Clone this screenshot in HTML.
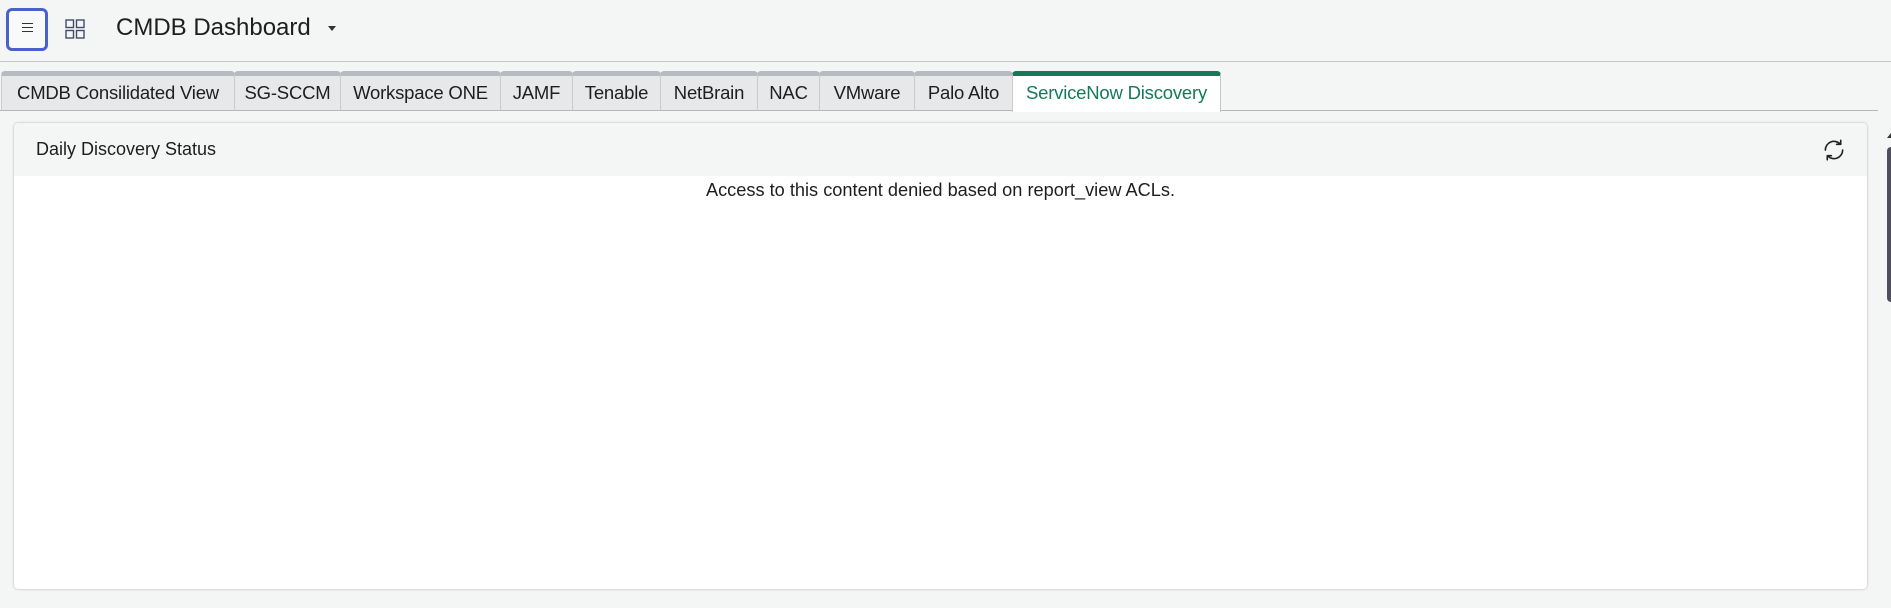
<!DOCTYPE html>
<html><head><meta charset="utf-8"><style>
*{box-sizing:border-box;margin:0;padding:0}
body{width:1891px;height:608px;background:#f4f5f5;font-family:"Liberation Sans",sans-serif;position:relative;overflow:hidden;color:#1e1e1e}
.hb{position:absolute;left:6px;top:8px;width:42px;height:43px;border:3px solid #4a62c8;border-radius:6px;background:#f8f9f9}
.hb i{position:absolute;left:13px;width:11px;height:1px;background:#333}
.grid{position:absolute;left:65px;top:19px;width:20px;height:20px}
.title{position:absolute;left:116px;top:14px;font-size:24px;color:#1e1e1e}
.caret{position:absolute;left:328px;top:26px;width:0;height:0;border-left:4px solid transparent;border-right:4px solid transparent;border-top:5px solid #333}
.hline{position:absolute;left:0;top:61px;width:1891px;height:1px;background:#c4c6c8}
.tabs{position:absolute;left:0;top:71px;height:40px;width:1891px}
.tline{position:absolute;left:0;top:110px;width:1878px;height:1px;background:#b4b8bc}
.tab{position:absolute;top:0;height:40px;background:#e6e8ea;border:1px solid #c8cbce;border-top:5px solid #b7bac0;border-radius:4px 4px 0 0;font-size:18.5px;text-align:center;line-height:33px;color:#1e1e1e;letter-spacing:-0.2px}
.tab.a{background:#fff;border-top-color:#15795a;color:#15795a;border-bottom:none}
.card{position:absolute;left:14px;top:123px;width:1853px;height:466px;background:#fff;border-radius:4px;box-shadow:0 0 2px rgba(0,0,0,.3);overflow:hidden}
.ch{height:53px;background:#f4f5f5;font-size:18px;padding-left:22px;line-height:53px}
.msg{text-align:center;font-size:18.2px;margin-top:4px}
.sb{position:absolute;left:1887px;top:147px;width:8px;height:155px;background:#4e4e5c;border-radius:4px}
</style></head><body>
<div class="hb"><i style="top:12px"></i><i style="top:16px"></i><i style="top:20px"></i></div>
<svg class="grid" viewBox="0 0 20 20" fill="none" stroke="#444b6a" stroke-width="1.4"><rect x="1" y="1" width="7.5" height="7.5"/><rect x="11.5" y="1" width="7.5" height="7.5"/><rect x="1" y="11.5" width="7.5" height="7.5"/><rect x="11.5" y="11.5" width="7.5" height="7.5"/></svg>
<div class="title">CMDB Dashboard</div>
<div class="caret"></div>
<div class="hline"></div>
<div class="tabs">
<div class="tab" style="left:1px;width:234px">CMDB Consilidated View</div>
<div class="tab" style="left:234px;width:107px">SG-SCCM</div>
<div class="tab" style="left:340px;width:161px">Workspace ONE</div>
<div class="tab" style="left:500px;width:73px">JAMF</div>
<div class="tab" style="left:572px;width:89px">Tenable</div>
<div class="tab" style="left:660px;width:98px">NetBrain</div>
<div class="tab" style="left:757px;width:63px">NAC</div>
<div class="tab" style="left:819px;width:96px">VMware</div>
<div class="tab" style="left:914px;width:99px">Palo Alto</div>
</div>
<div class="tline"></div>
<div class="tabs"><div class="tab a" style="left:1012px;width:209px;height:41px">ServiceNow Discovery</div></div>
<div class="card"><div class="ch">Daily Discovery Status</div><div class="msg">Access to this content denied based on report_view ACLs.</div>
<svg style="position:absolute;left:1807px;top:14px" width="26" height="26" viewBox="0 0 24 24" fill="none" stroke="#222" stroke-width="1.5" stroke-linecap="round" stroke-linejoin="round"><path d="M20 12a8 8 0 0 1-13.7 5.6"/><path d="M4 12A8 8 0 0 1 17.7 6.4"/><path d="M18.2 3v3.8h-3.8"/><path d="M5.8 21v-3.8h3.8"/></svg>
</div>
<div style="position:absolute;left:1887px;top:133px;border-left:4px solid transparent;border-bottom:5px solid #333"></div>
<div class="sb"></div>
</body></html>
